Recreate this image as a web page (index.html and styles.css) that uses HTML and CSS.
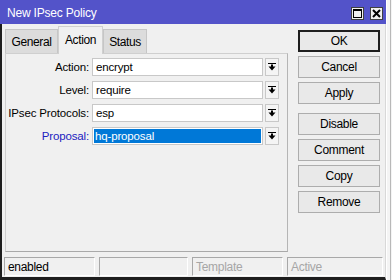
FILE: index.html
```html
<!DOCTYPE html>
<html>
<head>
<meta charset="utf-8">
<link rel="stylesheet" href="styles.css">
</head>
<body>
<div class="screen">
  <div class="window">
    <div class="titlebar">
      <span class="title">New IPsec Policy</span>
      <div class="tbtns">
        <span class="tbtn"><svg width="9" height="9" viewBox="0 0 9 9"><rect x="0.5" y="0.5" width="8" height="8" fill="none" stroke="#000"/><rect x="0" y="0" width="9" height="2" fill="#000"/></svg></span>
        <span class="tbtn"><svg width="9" height="9" viewBox="0 0 9 9"><path d="M1 1 L8 8 M8 1 L1 8" stroke="#000" stroke-width="2"/></svg></span>
      </div>
    </div>
    <div class="body">
      <div class="main">
        <div class="left">
          <div class="tabs">
            <div class="tab">General</div>
            <div class="tab active">Action</div>
            <div class="tab">Status</div>
          </div>
          <div class="panel">
            <div class="row">
              <label class="lbl">Action:</label>
              <div class="field">encrypt</div>
              <div class="dd"><svg width="8" height="8" viewBox="0 0 8 8"><rect x="0" y="0" width="8" height="1" fill="#000"/><rect x="3" y="1.5" width="2" height="2.5" fill="#000"/><path d="M0.5 3.5 L7.5 3.5 L4 7.5 Z" fill="#000"/></svg></div>
            </div>
            <div class="row">
              <label class="lbl">Level:</label>
              <div class="field">require</div>
              <div class="dd"><svg width="8" height="8" viewBox="0 0 8 8"><rect x="0" y="0" width="8" height="1" fill="#000"/><rect x="3" y="1.5" width="2" height="2.5" fill="#000"/><path d="M0.5 3.5 L7.5 3.5 L4 7.5 Z" fill="#000"/></svg></div>
            </div>
            <div class="row">
              <label class="lbl">IPsec Protocols:</label>
              <div class="field">esp</div>
              <div class="dd"><svg width="8" height="8" viewBox="0 0 8 8"><rect x="0" y="0" width="8" height="1" fill="#000"/><rect x="3" y="1.5" width="2" height="2.5" fill="#000"/><path d="M0.5 3.5 L7.5 3.5 L4 7.5 Z" fill="#000"/></svg></div>
            </div>
            <div class="row">
              <label class="lbl blue">Proposal:</label>
              <div class="field sel"><span class="seltext">hq-proposal</span></div>
              <div class="dd"><svg width="8" height="8" viewBox="0 0 8 8"><rect x="0" y="0" width="8" height="1" fill="#000"/><rect x="3" y="1.5" width="2" height="2.5" fill="#000"/><path d="M0.5 3.5 L7.5 3.5 L4 7.5 Z" fill="#000"/></svg></div>
            </div>
          </div>
        </div>
        <div class="buttons">
          <div class="btn default">OK</div>
          <div class="btn">Cancel</div>
          <div class="btn">Apply</div>
          <div class="btn sep">Disable</div>
          <div class="btn">Comment</div>
          <div class="btn">Copy</div>
          <div class="btn">Remove</div>
        </div>
      </div>
      <div class="status">
        <div class="cell c1">enabled</div>
        <div class="cell c2"></div>
        <div class="cell c3 dim">Template</div>
        <div class="cell c4 dim">Active</div>
      </div>
    </div>
  </div>
  <div class="outside"></div>
</div>
</body>
</html>
```
FILE: styles.css
```css
html, body {
  margin: 0;
  padding: 0;
}
body {
  width: 392px;
  height: 280px;
  overflow: hidden;
  background: #f0f0f0;
  font-family: "Liberation Sans", Arial, sans-serif;
  font-size: 11px;
  color: #000;
}
.screen {
  display: flex;
  width: 392px;
  height: 280px;
}
.window {
  width: 386px;
  height: 280px;
  display: flex;
  flex-direction: column;
  box-sizing: border-box;
}
.outside {
  width: 6px;
  height: 280px;
  background: #f4f4f4;
  border-left: 1px solid #fff;
  box-sizing: border-box;
  position: relative;
}
.outside::after {
  content: "";
  display: block;
  margin-left: 3px;
  width: 1px;
  height: 280px;
  background: #b8b8b8;
}
.titlebar {
  height: 24px;
  background: #5353c9;
  display: flex;
  align-items: center;
  justify-content: space-between;
  padding: 0 3px 0 7px;
  flex-shrink: 0;
}
.title {
  color: #fff;
  font-size: 12px;
  letter-spacing: -0.2px;
  padding-top: 1px;
}
.tbtns {
  display: flex;
  gap: 6px;
  margin-top: 3px;
}
.tbtn {
  width: 11px;
  height: 11px;
  background: #f0f0f0;
  border: 1px solid #404040;
  display: flex;
  align-items: center;
  justify-content: center;
}
.body {
  flex: 1;
  display: flex;
  flex-direction: column;
  border-left: 2px solid #1e1e1e;
  border-bottom: 3px solid #1e1e1e;
  border-right: 1px solid #d8d8d8;
  background: #f0f0f0;
}
.main {
  flex: 1;
  display: flex;
}
.left {
  margin-left: 3px;
  width: 283px;
  display: flex;
  flex-direction: column;
  margin-top: 1px;
}
.tabs {
  display: flex;
  height: 28px;
  align-items: flex-end;
  padding-left: 0;
  position: relative;
  z-index: 1;
}
.tab {
  height: 24px;
  box-sizing: border-box;
  padding: 0 8px;
  display: flex;
  align-items: center;
  background: #dcdcdc;
  border: 1px solid #c6c6c6;
  border-bottom: none;
  font-size: 12px;
  letter-spacing: -0.4px;
  margin-bottom: 0;
}
.tab:first-child {
  width: 53px;
  justify-content: center;
}
.tab.active {
  height: 28px;
  width: 45px;
  justify-content: center;
  background: #f0f0f0;
  border-color: #d0d0d0;
  margin-bottom: -1px;
  padding: 0;
  padding-bottom: 2px;
}
.tab:last-child {
  width: 44px;
  justify-content: center;
  padding: 0;
}
.panel {
  height: 199px;
  box-sizing: border-box;
  border: 1px solid #cfcfcf;
  border-right-color: #b5b5b5;
  border-bottom-color: #a9a9a9;
  display: flex;
  flex-direction: column;
  gap: 5px;
  padding-top: 4px;
}
.row {
  display: flex;
  align-items: center;
  height: 18px;
}
.lbl {
  width: 83px;
  text-align: right;
  padding-right: 3px;
  font-size: 11.5px;
  letter-spacing: -0.15px;
}
.lbl.blue {
  color: #2020c0;
}
.field {
  width: 171px;
  height: 18px;
  box-sizing: border-box;
  background: #fff;
  border: 1px solid #c8c8c8;
  padding-left: 3px;
  display: flex;
  align-items: center;
  font-size: 11.5px;
  letter-spacing: -0.15px;
}
.field.sel {
  padding: 1px;
}
.seltext {
  flex: 1;
  height: 14px;
  background: #0078d7;
  color: #fff;
  outline: 1px dotted #ffffff;
  display: flex;
  align-items: center;
  padding-left: 1px;
}
.dd {
  margin-left: 2px;
  width: 14px;
  height: 18px;
  box-sizing: border-box;
  border: 1px solid #c8c8c8;
  background: #f4f4f4;
  display: flex;
  align-items: center;
  justify-content: center;
}
.buttons {
  margin-left: 10px;
  width: 82px;
  display: flex;
  flex-direction: column;
  gap: 4px;
  padding-top: 6px;
}
.btn {
  height: 22px;
  box-sizing: border-box;
  border: 1px solid #adadad;
  background: #e9e9e9;
  display: flex;
  align-items: center;
  justify-content: center;
  font-size: 12px;
  letter-spacing: -0.3px;
}
.btn.default {
  border: 2px solid #1e1e1e;
}
.btn.sep {
  margin-top: 5px;
}
.status {
  height: 22px;
  display: flex;
  gap: 4px;
  padding: 2px 0 2px 2px;
  box-sizing: border-box;
}
.cell {
  height: 19px;
  box-sizing: border-box;
  border: 1px solid #a8a8a8;
  border-right-color: #fff;
  border-bottom-color: #fff;
  display: flex;
  align-items: center;
  padding-left: 3px;
  font-size: 12px;
  letter-spacing: -0.3px;
}
.c1 { width: 91px; }
.c2 { width: 89px; }
.c3 { width: 91px; }
.c4 { width: 96px; }
.dim { color: #a6a6a6; }
```
